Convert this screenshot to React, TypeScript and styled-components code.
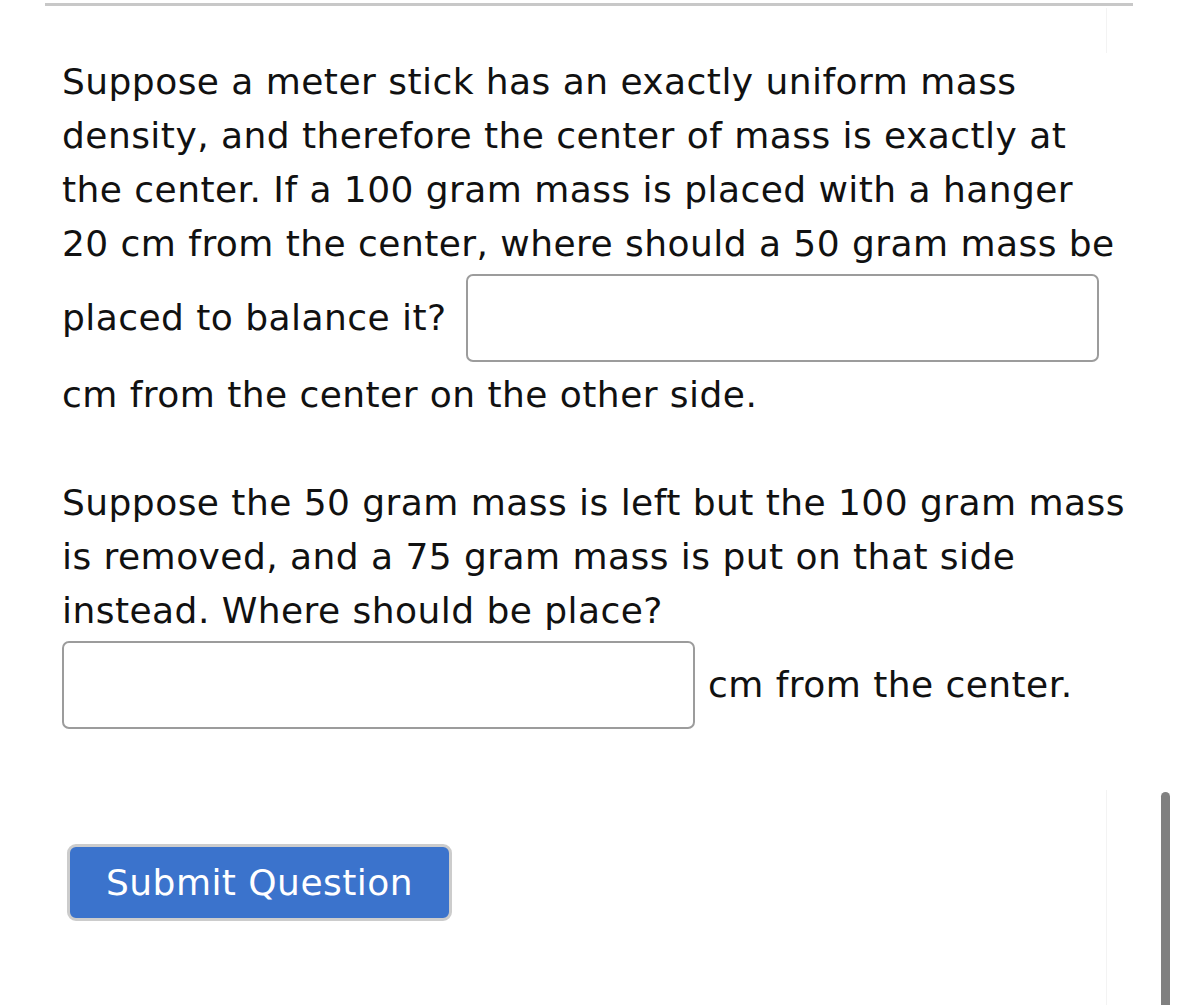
import styled, { createGlobalStyle } from "styled-components";

const GlobalStyle = createGlobalStyle`
	html, body {
		margin: 0;
		padding: 0;
		background: #ffffff;
	}
	body {
		font-family: "DejaVu Sans", Verdana, sans-serif;
		color: #111111;
	}
`;

const Page = styled.div`
	position: relative;
	width: 1179px;
	height: 1005px;
	overflow: hidden;
	box-sizing: border-box;
	padding: 3px 46px 0 45px;
`;

const TopRule = styled.div`
	height: 3px;
	background-color: #c8c8c8;
`;

const Question = styled.div`
	padding: 49px 0 0 17px;
	width: 1065px;
	font-size: 36px;
	letter-spacing: 0.45px;
	line-height: 54px;
`;

const Paragraph = styled.p<{ $gap?: number }>`
	margin: 0 0 ${({ $gap }) => $gap ?? 0}px 0;
`;

const AnswerRow = styled.div<{ $top: number; $bottom: number; $gap: number }>`
	display: flex;
	align-items: center;
	gap: ${({ $gap }) => $gap}px;
	margin: ${({ $top }) => $top}px 0 ${({ $bottom }) => $bottom}px 0;
`;

const AnswerBox = styled.input`
	box-sizing: border-box;
	width: 633px;
	height: 88px;
	border: 2px solid #9c9c9c;
	border-radius: 7px;
	background: #ffffff;
	font-size: 36px;
	outline: none;
	flex: none;
`;

const SubmitRow = styled.div`
	padding: 115px 0 0 5px;
`;

const SubmitButton = styled.button`
	box-sizing: border-box;
	width: 385px;
	height: 77px;
	border: 3px solid #cccccc;
	border-radius: 9px;
	background-color: #3b73cc;
	color: #ffffff;
	font-family: "DejaVu Sans", Verdana, sans-serif;
	font-size: 36px;
	letter-spacing: 0.45px;
	padding: 0;
`;

const SideEdge = styled.div<{ $top: number; $height: number }>`
	position: absolute;
	left: 1106px;
	top: ${({ $top }) => $top}px;
	height: ${({ $height }) => $height}px;
	width: 1px;
	background-color: #f3f3f3;
`;

const ScrollThumb = styled.div`
	position: absolute;
	left: 1161px;
	top: 792px;
	bottom: -10px;
	width: 9px;
	border-radius: 5px;
	background-color: #808080;
`;

export default function App() {
	return (
		<Page>
			<GlobalStyle />
			<TopRule />
			<Question>
				<Paragraph>
					Suppose a meter stick has an exactly uniform mass density, and therefore the
					center of mass is exactly at the center. If a 100 gram mass is placed with a
					hanger 20 cm from the center, where should a 50 gram mass be
				</Paragraph>
				<AnswerRow $top={3} $bottom={6} $gap={19}>
					<span>placed to balance it?</span>
					<AnswerBox aria-label="distance for 50 gram mass" />
				</AnswerRow>
				<Paragraph $gap={54}>cm from the center on the other side.</Paragraph>
				<Paragraph>
					Suppose the 50 gram mass is left but the 100 gram mass is removed, and a 75 gram
					mass is put on that side instead. Where should be place?
				</Paragraph>
				<AnswerRow $top={3} $bottom={0} $gap={13}>
					<AnswerBox aria-label="distance for 75 gram mass" />
					<span>cm from the center.</span>
				</AnswerRow>
				<SubmitRow>
					<SubmitButton>Submit Question</SubmitButton>
				</SubmitRow>
			</Question>
			<SideEdge $top={8} $height={45} />
			<SideEdge $top={790} $height={215} />
			<ScrollThumb />
		</Page>
	);
}
